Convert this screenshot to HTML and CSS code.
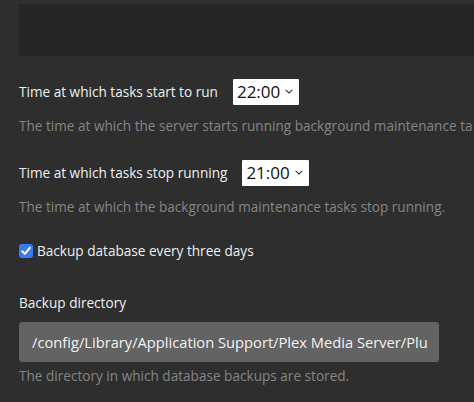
FILE: index.html
```html
<!DOCTYPE html>
<html>
<head>
<meta charset="utf-8">
<link rel="stylesheet" href="styles.css">
</head>
<body>
<div class="page">
  <div class="topbox"></div>
  <div class="group first">
    <div class="row">
      <span class="label">Time at which tasks start to run</span>
      <span class="select">22:00<svg class="chev" width="8" height="5" viewBox="0 0 8 5"><path d="M0.6 0.8 L4 4 L7.4 0.8" fill="none" stroke="#333" stroke-width="1.1"/></svg></span>
    </div>
    <div class="desc">The time at which the server starts running background maintenance ta</div>
  </div>
  <div class="group">
    <div class="row">
      <span class="label">Time at which tasks stop running</span>
      <span class="select">21:00<svg class="chev" width="8" height="5" viewBox="0 0 8 5"><path d="M0.6 0.8 L4 4 L7.4 0.8" fill="none" stroke="#333" stroke-width="1.1"/></svg></span>
    </div>
    <div class="desc">The time at which the background maintenance tasks stop running.</div>
  </div>
  <div class="check">
    <span class="box"><svg width="14" height="14" viewBox="0 0 14 14"><path d="M3.2 7.2 L5.9 9.9 L10.8 3.8" fill="none" stroke="#fff" stroke-width="2" stroke-linecap="round" stroke-linejoin="round"/></svg></span>
    <span class="checklabel">Backup database every three days</span>
  </div>
  <div class="dirlabel">Backup directory</div>
  <div class="input">/config/Library/Application Support/Plex Media Server/Plu</div>
  <div class="desc small">The directory in which database backups are stored.</div>
</div>
</body>
</html>
```
FILE: styles.css
```css
html, body {
  margin: 0;
  padding: 0;
  background: #2e2e2e;
  overflow: hidden;
}
body {
  width: 474px;
  height: 402px;
  font-family: "Open Sans", sans-serif;
  color: #eeeeee;
}
.page {
  padding: 4px 0 0 19px;
}
.topbox {
  height: 52px;
  background: #262626;
}
.group.first {
  margin-top: 23px;
}
.row {
  display: flex;
  align-items: center;
  height: 25px;
}
.label {
  font-size: 13.6px;
  white-space: nowrap;
}
.select {
  display: inline-flex;
  align-items: center;
  background: #ffffff;
  color: #111;
  font-size: 17px;
  height: 26px;
  padding: 0 6px 0 4px;
  margin-left: 15px;
  box-sizing: border-box;
  border-radius: 1px;
}
.chev {
  margin-left: 5px;
  margin-top: -1px;
}
.desc {
  font-size: 13.6px;
  color: #858585;
  white-space: nowrap;
  margin-top: 12px;
  margin-bottom: 24px;
  line-height: 20px;
}
.check {
  display: flex;
  align-items: center;
}
.box {
  width: 14px;
  height: 14px;
  background: #3a7bf2;
  border-radius: 3px;
  display: inline-block;
  margin-right: 4px;
}
.box svg { display: block; }
.checklabel {
  font-size: 13.6px;
}
.dirlabel {
  font-size: 13.6px;
  margin-top: 33px;
  line-height: 20px;
}
.input {
  margin-top: 9px;
  width: 420px;
  height: 40px;
  box-sizing: border-box;
  background: #636363;
  border-radius: 3px;
  font-size: 14.7px;
  line-height: 40px;
  padding-left: 13px;
  white-space: nowrap;
  color: #f2f2f2;
}
.desc.small {
  margin-top: 4px;
}
```
